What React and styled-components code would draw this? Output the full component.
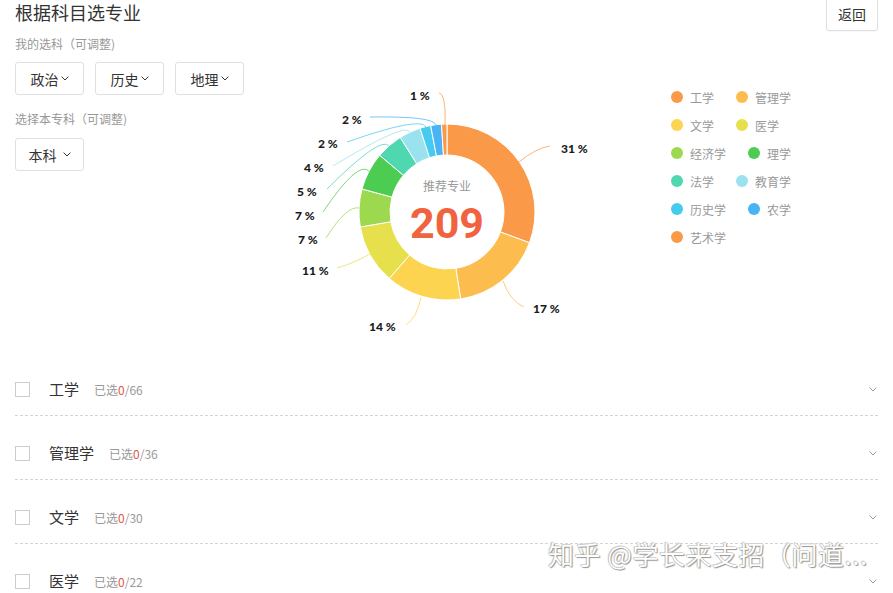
import React from "react";
import styled, { createGlobalStyle } from "styled-components";

const GlobalStyle = createGlobalStyle`
  html, body { margin: 0; padding: 0; background: #fff; }
  body {
    font-family: "Noto Sans CJK SC", "Noto Sans", sans-serif;
    color: #333;
    overflow: hidden;
  }
  * { box-sizing: border-box; }
`;

const Page = styled.div`
  position: relative;
  width: 893px;
  height: 593px;
  padding: 0 15px;
  overflow: hidden;
`;

const Header = styled.header`
  display: flex;
  justify-content: space-between;
  align-items: flex-start;
  height: 34px;
`;

const Title = styled.h1`
  margin: 2px 0 0;
  font-size: 18px;
  line-height: 20px;
  font-weight: normal;
  color: #333;
`;

const BackButton = styled.button`
  margin-top: -3px;
  height: 34px;
  padding: 0 11px;
  border: 1px solid #e0e0e0;
  border-radius: 3px;
  background: #fff;
  font-family: inherit;
  font-size: 14px;
  color: #333;
  box-shadow: 0 1px 2px rgba(0, 0, 0, 0.04);
`;

const Body = styled.section`
  display: flex;
  align-items: flex-start;
`;

const Filters = styled.div`
  width: 265px;
  display: flex;
  flex-direction: column;
`;

const SectionLabel = styled.div`
  font-size: 12px;
  line-height: 20px;
  color: #999;
  margin-top: ${(p) => p.$top || 0}px;
`;

const ButtonRow = styled.div`
  display: flex;
  gap: 11px;
  margin-top: ${(p) => p.$top || 8}px;
`;

const SelectButton = styled.div`
  width: 69px;
  height: 33px;
  border: 1px solid #e0e0e0;
  border-radius: 3px;
  display: flex;
  align-items: center;
  justify-content: center;
  gap: ${(p) => p.$gap || 2}px;
  font-size: 14px;
  color: #333;
  background: #fff;
`;

const ChartSvg = styled.svg`
  display: block;
  margin-top: 51px;
  width: 340px;
  height: 260px;
  flex: none;
`;

const Legend = styled.div`
  margin-left: 51px;
  margin-top: 49px;
  display: flex;
  flex-direction: column;
`;

const LegendRow = styled.div`
  display: flex;
  align-items: center;
  height: 28px;
`;

const LegendItem = styled.div`
  display: flex;
  align-items: center;
  margin-right: 22px;
`;

const Dot = styled.span`
  width: 12px;
  height: 12px;
  border-radius: 50%;
  background: ${(p) => p.$color};
  margin-right: 7px;
`;

const LegendText = styled.span`
  font-size: 12px;
  color: #999;
`;

const List = styled.div`
  margin-top: 7px;
`;

const Row = styled.div`
  display: flex;
  align-items: center;
  height: 64px;
  padding: 27px 0 16px;
  border-bottom: 1px dashed #d4d4d4;
`;

const Checkbox = styled.span`
  width: 15px;
  height: 15px;
  border: 1px solid #ccc;
  background: #fff;
  flex: none;
`;

const RowTitle = styled.span`
  margin-left: 19px;
  font-size: 15px;
  line-height: 20px;
  color: #333;
`;

const RowCount = styled.span`
  margin-left: 15px;
  font-size: 12px;
  color: #999;
`;

const Red = styled.span`
  color: #e05a4a;
`;

const RowChevron = styled.span`
  margin-left: auto;
  margin-right: 1px;
  display: flex;
`;

const Watermark = styled.div`
  position: absolute;
  left: 548px;
  top: 536px;
  font-size: 26px;
  line-height: 36px;
  letter-spacing: 0.5px;
  color: #fff;
  text-shadow: 0 0 1px #777, 1px 1px 1px #999, -1px -1px 0 #ddd;
  white-space: nowrap;
`;

const Chevron = ({ color = "#333", w = 8, h = 5 }) => (
  <svg width={w} height={h} viewBox="0 0 8 5" fill="none">
    <path d="M0.6 0.6 L4 4 L7.4 0.6" stroke={color} strokeWidth="1" />
  </svg>
);

const segments = [
  { name: "工学", v: 31, color: "#fa9a49", label: "31 %", lx: 561, ly: 149, line: "M519,162 Q536,148 550,146" },
  { name: "管理学", v: 17, color: "#fcbd4e", label: "17 %", lx: 533, ly: 309, line: "M503,281 Q510,301 524,307" },
  { name: "文学", v: 14, color: "#fdd44f", label: "14 %", lx: 369, ly: 327, line: "M421,297 Q417,318 406,325" },
  { name: "医学", v: 11, color: "#e7e04d", label: "11 %", lx: 302, ly: 271, line: "M370,254 Q352,264 337,268" },
  { name: "经济学", v: 7, color: "#9cd94e", label: "7 %", lx: 298, ly: 240, line: "M359,208 Q347,205 326,238" },
  { name: "理学", v: 7, color: "#4ccc51", label: "7 %", lx: 295, ly: 216, line: "M369,171 Q358,160 323,212" },
  { name: "法学", v: 5, color: "#4fd7b0", label: "5 %", lx: 297, ly: 192, line: "M389,146 Q381,135 327,189" },
  { name: "教育学", v: 4, color: "#99e2ee", label: "4 %", lx: 304, ly: 168, line: "M410,132 Q405,122 333,166" },
  { name: "历史学", v: 2, color: "#45cbef", label: "2 %", lx: 318, ly: 144, line: "M426,127 Q421,116 347,142" },
  { name: "农学", v: 2, color: "#48b3f5", label: "2 %", lx: 342, ly: 120, line: "M436,125 Q434,116 370,117" },
  { name: "艺术学", v: 1, color: "#fa9a49", label: "1 %", lx: 410, ly: 96, line: "M445,124 Q446,94 439,93" },
];

const CX = 447;
const CY = 212;
const R = 88;
const r = 57;

const pt = (rad, a) => {
  const t = (a * Math.PI) / 180;
  return [CX + rad * Math.sin(t), CY - rad * Math.cos(t)];
};

const arcPath = (a0, a1) => {
  const large = a1 - a0 > 180 ? 1 : 0;
  const [x0, y0] = pt(R, a0);
  const [x1, y1] = pt(R, a1);
  const [x2, y2] = pt(r, a1);
  const [x3, y3] = pt(r, a0);
  return `M${x0},${y0} A${R},${R} 0 ${large} 1 ${x1},${y1} L${x2},${y2} A${r},${r} 0 ${large} 0 ${x3},${y3} Z`;
};

const Donut = () => {
  const total = segments.reduce((s, x) => s + x.v, 0);
  let acc = 0;
  const arcs = segments.map((s) => {
    const a0 = (acc / total) * 360;
    acc += s.v;
    const a1 = (acc / total) * 360;
    return { ...s, d: arcPath(a0, a1) };
  });
  return (
    <ChartSvg viewBox="280 85 340 260">
      {arcs.map((s) => (
        <path key={s.name} d={s.d} fill={s.color} stroke="#fff" strokeWidth="1" />
      ))}
      {arcs.map((s) => (
        <path key={s.name + "l"} d={s.line} fill="none" stroke={s.color} strokeOpacity="0.75" strokeWidth="1" />
      ))}
      {arcs.map((s) => (
        <text
          key={s.name + "t"}
          x={s.lx}
          y={s.ly + 4}
          fontFamily="Lato, 'Open Sans', sans-serif"
          fontWeight="900"
          fontSize="12"
          fill="#1b1b1b"
        >
          {s.label}
        </text>
      ))}
      <text x={CX} y={191} textAnchor="middle" fontSize="12" fill="#999" fontFamily="'Noto Sans CJK SC', sans-serif">
        推荐专业
      </text>
      <text x={CX} y={238} textAnchor="middle" fontSize="43" fontWeight="700" fill="#f1633f" fontFamily="Roboto, 'Open Sans', sans-serif">
        209
      </text>
    </ChartSvg>
  );
};

const legendRows = [
  ["工学", "管理学"],
  ["文学", "医学"],
  ["经济学", "理学"],
  ["法学", "教育学"],
  ["历史学", "农学"],
  ["艺术学"],
];

const colorOf = (n) => segments.find((s) => s.name === n).color;

const rows = [
  { name: "工学", total: 66 },
  { name: "管理学", total: 36 },
  { name: "文学", total: 30 },
  { name: "医学", total: 22 },
];

export default function App() {
  return (
    <>
      <GlobalStyle />
      <Page>
        <Header>
          <Title>根据科目选专业</Title>
          <BackButton>返回</BackButton>
        </Header>
        <Body>
          <Filters>
            <SectionLabel>我的选科（可调整)</SectionLabel>
            <ButtonRow>
              <SelectButton>政治<Chevron /></SelectButton>
              <SelectButton>历史<Chevron /></SelectButton>
              <SelectButton>地理<Chevron /></SelectButton>
            </ButtonRow>
            <SectionLabel $top={14}>选择本专科（可调整)</SectionLabel>
            <ButtonRow $top={9}>
              <SelectButton $gap={6}>本科<Chevron /></SelectButton>
            </ButtonRow>
          </Filters>
          <Donut />
          <Legend>
            {legendRows.map((row, i) => (
              <LegendRow key={i}>
                {row.map((n) => (
                  <LegendItem key={n}>
                    <Dot $color={colorOf(n)} />
                    <LegendText>{n}</LegendText>
                  </LegendItem>
                ))}
              </LegendRow>
            ))}
          </Legend>
        </Body>
        <List>
          {rows.map((row) => (
            <Row key={row.name}>
              <Checkbox />
              <RowTitle>{row.name}</RowTitle>
              <RowCount>
                已选<Red>0</Red>/{row.total}
              </RowCount>
              <RowChevron>
                <Chevron color="#999" />
              </RowChevron>
            </Row>
          ))}
        </List>
        <Watermark>知乎 @学长来支招（问道...</Watermark>
      </Page>
    </>
  );
}
